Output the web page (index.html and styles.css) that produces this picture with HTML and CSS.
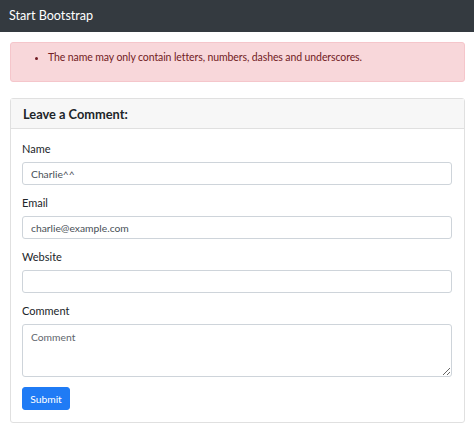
FILE: index.html
```html
<!DOCTYPE html>
<html lang="en">
<head>
<meta charset="utf-8">
<title>Leave a Comment</title>
<link rel="stylesheet" href="styles.css">
</head>
<body>
<nav class="navbar"><span class="brand">Start Bootstrap</span></nav>
<main class="container">
  <div class="alert">
    <ul class="alert-list">
      <li>The name may only contain letters, numbers, dashes and underscores.</li>
    </ul>
  </div>
  <section class="card">
    <header class="card-header">Leave a Comment:</header>
    <form class="card-body">
      <div class="group">
        <label class="label" for="name">Name</label>
        <input class="control" id="name" type="text" value="Charlie^^">
      </div>
      <div class="group">
        <label class="label" for="email">Email</label>
        <input class="control" id="email" type="text" value="charlie@example.com">
      </div>
      <div class="group">
        <label class="label" for="website">Website</label>
        <input class="control" id="website" type="text" value="">
      </div>
      <div class="group">
        <label class="label" for="comment">Comment</label>
        <textarea class="control textarea" id="comment" placeholder="Comment"></textarea>
      </div>
      <button class="btn" type="button">Submit</button>
    </form>
  </section>
</main>
</body>
</html>
```
FILE: styles.css
```css
* { box-sizing: border-box; }
html, body { margin: 0; padding: 0; background: #fff; }
body {
  font-family: Lato, "Open Sans", "Liberation Sans", sans-serif;
  font-size: 11px;
  color: #212529;
}
.navbar {
  height: 32px;
  background: #343a40;
  display: flex;
  align-items: center;
  padding-left: 9px;
}
.brand {
  color: #fff;
  font-size: 12.6px;
  line-height: 1;
}
.container {
  padding: 10px 9px 0 10px;
}
.alert {
  height: 40px;
  background: #f8d7da;
  border: 1px solid #f5c6cb;
  border-radius: 3px;
  color: #721c24;
  padding: 7px 12px 0 12px;
}
.alert-list {
  margin: 0;
  padding-left: 25px;
  line-height: 15px;
  font-size: 10.5px;
  letter-spacing: -0.1px;
}
.card {
  margin-top: 16px;
  border: 1px solid #e0e0e0;
  border-radius: 3px;
  background: #fff;
}
.card-header {
  height: 30px;
  background: #f7f7f7;
  border-bottom: 1px solid #e0e0e0;
  padding: 0 12px;
  display: flex;
  align-items: center;
  font-weight: 700;
  font-size: 12.8px;
  color: #212529;
}
.card-body {
  padding: 12px 12px 12px 11px;
  display: flex;
  flex-direction: column;
  align-items: flex-start;
}
.group {
  width: 100%;
  margin-bottom: 10px;
  display: flex;
  flex-direction: column;
}
.label {
  line-height: 16px;
  height: 16px;
  margin-bottom: 5px;
  color: #212529;
}
.control {
  width: 100%;
  height: 23px;
  border: 1px solid #ced4da;
  border-radius: 3px;
  padding: 0 8px;
  font-family: inherit;
  font-size: 10.3px;
  color: #495057;
  background: #fff;
  margin: 0;
}
.textarea {
  height: 53px;
  padding-top: 5px;
  display: block;
  resize: vertical;
  line-height: 15px;
}
.textarea::placeholder { color: #5f666d; opacity: 1; }
.btn {
  height: 23px;
  width: 48px;
  padding: 0;
  border: 1px solid #1f7bf5;
  border-radius: 3px;
  background: #1f7bf5;
  color: #fff;
  font-family: inherit;
  font-size: 10.3px;
  margin: 0;
}
```
